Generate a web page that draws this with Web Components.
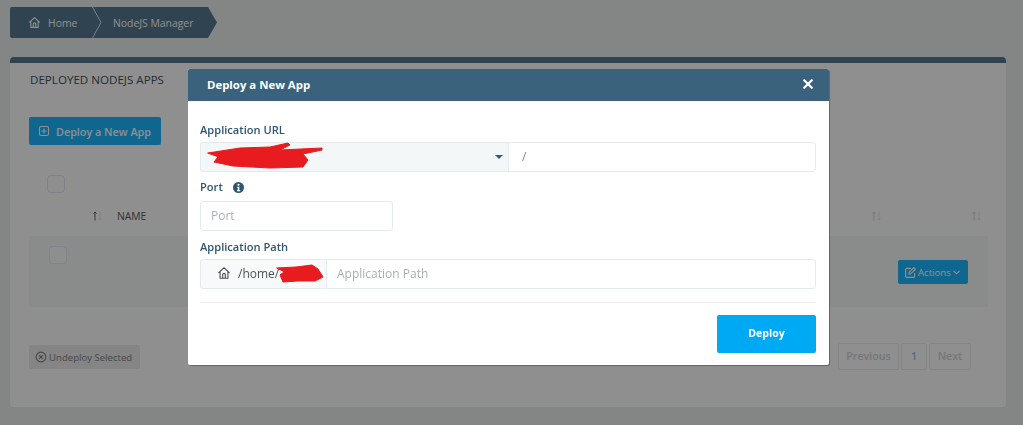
<!DOCTYPE html>
<html>
<head>
<meta charset="utf-8">
<title>NodeJS Manager</title>
<style>
  html, body { margin: 0; height: 100%; }
  body {
    background: #ecefef;
    font-family: "Open Sans", sans-serif;
    overflow: hidden;
    position: relative;
  }
</style>
</head>
<body>
<app-page>
  <crumb-bar></crumb-bar>
  <apps-card></apps-card>
</app-page>
<deploy-modal></deploy-modal>
<script>
const ICONS = {
  home: '<path d="M2 7.5 8 2l6 5.5M3.5 6.5V14h9V6.5M6.5 14v-4a1.5 1.5 0 0 1 3 0v4"/>',
  plus: '<rect x="2" y="2" width="12" height="12" rx="2"/><path d="M8 5v6M5 8h6"/>',
  edit: '<path d="M13 9v3.5a1.5 1.5 0 0 1-1.5 1.5h-8A1.5 1.5 0 0 1 2 12.5v-8A1.5 1.5 0 0 1 3.500 3H8"/><path d="M6.500 7.500 12 2l2 2-5.500 5.500-2.500.5z"/>',
  chevron: '<path d="M3 5.500 8 10l5-4.500"/>',
  cancel: '<circle cx="8" cy="8" r="6.500"/><path d="M5.800 5.800l4.400 4.400M10.200 5.800l-4.400 4.400"/>'
};

function icon(name, size, width) {
  return `<svg width="${size}" height="${size}" viewBox="0 0 16 16" fill="none" stroke="currentColor" stroke-width="${width || 1.4}" stroke-linecap="round" stroke-linejoin="round">${ICONS[name]}</svg>`;
}

class AppPage extends HTMLElement {
  constructor() {
    super();
    this.attachShadow({ mode: 'open' });
    this.shadowRoot.innerHTML = `
      <style>
        :host { display: flex; flex-direction: column; gap: 19px; padding: 7px 17px 18px 10px; height: 400px; }
      </style>
      <slot></slot>`;
  }
}

class CrumbBar extends HTMLElement {
  constructor() {
    super();
    this.attachShadow({ mode: 'open' });
    this.shadowRoot.innerHTML = `
      <style>
        :host {
          display: flex; align-items: center; align-self: flex-start;
          width: 207px; height: 31px; box-sizing: border-box;
          background: #55788f; color: #fff; font-size: 10.400px;
          clip-path: polygon(0 0, 198px 0, 207px 50%, 198px 100%, 0 100%);
          border-radius: 2px 0 0 2px;
        }
        .home { display: flex; align-items: center; gap: 7px; padding-left: 18px; width: 64px; }
        svg { display: block; flex: none; }
        .sep { margin-right: 11px; }
      </style>
      <span class="home">${icon('home', 13)}<span>Home</span></span>
      <svg class="sep" width="10" height="31" viewBox="0 0 10 31" fill="none" stroke="#dbe3e8" stroke-width="1"><path d="M.5 0 9 15.500.5 31"/></svg>
      <span>NodeJS Manager</span>`;
  }
}

class NmButton extends HTMLElement {
  constructor() {
    super();
    this.attachShadow({ mode: 'open' });
    this.shadowRoot.innerHTML = `
      <style>
        :host {
          display: inline-flex; align-items: center; box-sizing: border-box;
          background: var(--btn-bg, #1bb8ff); color: var(--btn-fg, #fff);
          border-radius: 2px; white-space: nowrap;
        }
      </style>
      <slot></slot>`;
  }
}

class NmCheck extends HTMLElement {
  constructor() {
    super();
    this.attachShadow({ mode: 'open' });
    this.shadowRoot.innerHTML = `
      <style>
        :host {
          display: block; width: 18px; height: 18px; box-sizing: border-box;
          border: 1.500px solid #e0ebf3; border-radius: 4px; background: #fdfdfd;
        }
      </style>`;
  }
}

class SortMark extends HTMLElement {
  constructor() {
    super();
    this.attachShadow({ mode: 'open' });
    this.shadowRoot.innerHTML = `
      <style>:host { display: block; width: 9px; height: 10px; } svg { display: block; }</style>
      <svg width="9" height="10" viewBox="0 0 9 10" fill="none" stroke-width="1">
        <path stroke="${this.getAttribute('tone') || '#cfd2d4'}" d="M2 9.500V1M.5 2.500 2 1l1.500 1.500"/>
        <path stroke="#e4e6e7" d="M7 .5V9M5.500 7.500 7 9l1.500-1.500"/>
      </svg>`;
  }
}

class AppsCard extends HTMLElement {
  constructor() {
    super();
    this.attachShadow({ mode: 'open' });
    this.shadowRoot.innerHTML = `
      <style>
        :host {
          display: flex; flex-direction: column; box-sizing: border-box;
          height: 350px; padding: 0 18px 0 19px;
          background: #fff; border-top: 6px solid #54798f;
          border-radius: 4px 4px 3px 3px; color: #3d4a52;
        }
        h2 { margin: 7px 0 0 1px; font-size: 11.600px; font-weight: 400; line-height: 20px; color: #40505c; }
        .add {
          width: 132px; height: 28px; margin-top: 27px;
          padding-left: 9px; gap: 6px; font-size: 10.800px; font-weight: 600;
        }
        .checks { margin: 30px 0 0 18px; }
        .head {
          display: flex; align-items: center; height: 20px; margin-top: 13px;
          font-size: 10.300px; color: #52585c;
        }
        .head .first { margin-left: 64px; margin-right: 15px; }
        .head .name { flex: 1; }
        .head .mid { margin-right: 91px; }
        .head .last { margin-right: 7px; }
        .row {
          display: flex; justify-content: space-between; box-sizing: border-box;
          height: 71px; margin-top: 10px; padding: 10px 20px 0 20px;
          background: #f6f8f8;
        }
        .actions {
          width: 70px; height: 24px; margin-top: 14px;
          padding-left: 6px; gap: 1px; font-size: 9.600px;
        }
        .foot {
          display: flex; justify-content: space-between; align-items: flex-start;
          margin-top: 36px; padding-right: 17px;
        }
        .undeploy {
          --btn-bg: #eeeeee; --btn-fg: #7c8084; width: 111px; height: 24px; margin-top: 2px;
          padding-left: 6px; gap: 2px; font-size: 9.600px;
        }
        .pages { display: flex; gap: 2px; font-size: 10.700px; font-weight: 600; color: #d0d4d6; }
        .pages span {
          display: flex; align-items: center; justify-content: center;
          height: 27px; box-sizing: border-box; padding-bottom: 2px;
          border: 1px solid #ebedee; border-radius: 2px;
        }
        .pages .cur { color: #9cc4de; }
        svg { display: block; flex: none; }
      </style>
      <h2>DEPLOYED NODEJS APPS</h2>
      <div><nm-button class="add">${icon('plus', 12)}<span>Deploy a New App</span></nm-button></div>
      <nm-check class="checks"></nm-check>
      <div class="head">
        <sort-mark class="first" tone="#5d6266"></sort-mark>
        <span class="name">NAME</span>
        <sort-mark class="mid"></sort-mark>
        <sort-mark class="last"></sort-mark>
      </div>
      <div class="row">
        <nm-check></nm-check>
        <nm-button class="actions">${icon('edit', 13)}<span>Actions</span>${icon('chevron', 9, 2)}</nm-button>
      </div>
      <div class="foot">
        <nm-button class="undeploy">${icon('cancel', 12, 1.500)}<span>Undeploy Selected</span></nm-button>
        <div class="pages">
          <span style="width:61px">Previous</span>
          <span class="cur" style="width:26px">1</span>
          <span style="width:42px">Next</span>
        </div>
      </div>`;
  }
}

class FormField extends HTMLElement {
  constructor() {
    super();
    this.attachShadow({ mode: 'open' });
    this.shadowRoot.innerHTML = `
      <style>
        :host { display: block; }
        label {
          display: flex; align-items: center; gap: 10px;
          box-sizing: border-box; height: 16px; padding-bottom: 2px; margin-bottom: 4px;
          font-size: 11.100px; font-weight: 600; color: #2f5570;
        }
        :host([hinted]) label { margin-bottom: 6px; }
        ::slotted([slot="hint"]) { margin-top: 2px; }
      </style>
      <label><span>${this.getAttribute('label')}</span><slot name="hint"></slot></label>
      <slot></slot>`;
  }
}

class TextBox extends HTMLElement {
  constructor() {
    super();
    this.attachShadow({ mode: 'open' });
    this.shadowRoot.innerHTML = `
      <style>
        :host {
          display: flex; align-items: center; box-sizing: border-box; height: 30px;
          padding: 0 10px 2px; background: #fff;
          border: 1px solid #e4ebf0; border-radius: 3px;
          font-size: 12px; color: #a9afb6;
        }
      </style>
      <slot></slot>`;
  }
}

class RedactMark extends HTMLElement {
  constructor() {
    super();
    this.attachShadow({ mode: 'open' });
    const w = this.getAttribute('w');
    const h = this.getAttribute('h');
    this.shadowRoot.innerHTML = `
      <style>
        :host { position: absolute; display: block; left: ${this.getAttribute('x')}px; top: ${this.getAttribute('y')}px; }
        svg { display: block; }
      </style>
      <svg width="${w}" height="${h}" viewBox="0 0 ${w} ${h}" stroke-linejoin="round" stroke-linecap="round">
        <path fill="#e81b1e" stroke="#e81b1e" stroke-width="1" d="${this.getAttribute('d')}"/>
      </svg>`;
  }
}

class DeployModal extends HTMLElement {
  constructor() {
    super();
    this.attachShadow({ mode: 'open' });
    this.shadowRoot.innerHTML = `
      <style>
        :host {
          position: fixed; inset: 0; display: block; box-sizing: border-box;
          padding: 69px 0 0 188px; background: rgba(0,0,0,.44);
          color: #2f5570;
        }
        .dialog {
          position: relative; width: 641px; height: 296px;
          background: #fff; border-radius: 2px;
          box-shadow: 1px 1px 1px rgba(0,0,0,.3);
        }
        header {
          display: flex; align-items: center; justify-content: space-between; box-sizing: border-box;
          height: 32px; padding: 0 16px 2px 19px;
          background: #3b627c; color: #fff;
          font-size: 11.400px; font-weight: 700; border-radius: 2px 2px 0 0;
        }
        .close { display: block; }
        .form { display: flex; flex-direction: column; gap: 7px; padding: 21px 13px 0 12px; }
        .url { display: flex; }
        .select {
          display: flex; align-items: center; justify-content: flex-end; box-sizing: border-box;
          width: 308px; height: 30px; padding-right: 5px;
          background: #f3f7f7; border: 1px solid #e4ebf0; border-right: 0; border-radius: 3px 0 0 3px;
        }
        .caret { width: 0; height: 0; border: 4px solid transparent; border-top: 4px solid #3b5a70; border-bottom: 0; }
        .url text-box { flex: 1; padding-left: 13px; border-radius: 0 3px 3px 0; color: #7d8790; }
        .port { width: 193px; }
        .pathfield { margin-top: 1px; }
        .path { display: flex; }
        .prefix {
          display: flex; align-items: center; gap: 7px; box-sizing: border-box;
          width: 126px; height: 30px; padding: 0 0 2px 16px;
          background: #f8f9fa; border: 1px solid #e4ebf0; border-right: 0; border-radius: 3px 0 0 3px;
          font-size: 12px; color: #4c5257;
        }
        .path text-box { flex: 1; border-radius: 0 3px 3px 0; }
        hr { height: 1px; margin: 13px 13px 0 12px; border: 0; background: #eff1f2; }
        footer { display: flex; justify-content: flex-end; padding: 12px 13px 0 0; }
        .deploy {
          --btn-bg: #00a9f4; width: 99px; height: 38px; justify-content: center; padding-bottom: 2px;
          font-size: 10.600px; font-weight: 700;
        }
        svg { display: block; flex: none; }
      </style>
      <div class="dialog">
        <header>
          <span>Deploy a New App</span>
          <svg class="close" width="10" height="10" viewBox="0 0 10 10" fill="none" stroke="#fff" stroke-width="2.200" stroke-linecap="round"><path d="M1.200 1.200l7.600 7.600M8.800 1.200 1.200 8.800"/></svg>
        </header>
        <div class="form">
          <form-field label="Application URL">
            <div class="url">
              <div class="select"><span class="caret"></span></div>
              <text-box>/</text-box>
            </div>
          </form-field>
          <form-field label="Port" hinted>
            <svg slot="hint" width="11" height="11" viewBox="0 0 16 16"><circle cx="8" cy="8" r="8" fill="#2f5570"/><circle cx="8" cy="4" r="1.600" fill="#fff"/><path d="M6 6.800h3.200v5H10.500v1.600H5.800v-1.600H7V8.400H6z" fill="#fff"/></svg>
            <text-box class="port">Port</text-box>
          </form-field>
          <form-field class="pathfield" label="Application Path">
            <div class="path">
              <div class="prefix">${icon('home', 14, 1.300)}<span>/home/</span></div>
              <text-box>Application Path</text-box>
            </div>
          </form-field>
        </div>
        <hr>
        <footer><nm-button class="deploy">Deploy</nm-button></footer>
        <redact-mark x="18" y="72" w="120" h="30"
          d="M2 12 L34 7 L64 6 L82 2 L84 4 L74 9 L116 7 L116 9 L97 13 L102 19 L97 26 L64 27 L27 25 L8 21 L12 16 Z"></redact-mark>
        <redact-mark x="86" y="195" w="52" h="20"
          d="M3 4 L22 3 L38 1 L44 5 L49 13 L41 17 L24 17 L9 18 L6 11 L10 8 Z"></redact-mark>
      </div>`;
  }
}

customElements.define('app-page', AppPage);
customElements.define('crumb-bar', CrumbBar);
customElements.define('nm-button', NmButton);
customElements.define('nm-check', NmCheck);
customElements.define('sort-mark', SortMark);
customElements.define('apps-card', AppsCard);
customElements.define('form-field', FormField);
customElements.define('text-box', TextBox);
customElements.define('redact-mark', RedactMark);
customElements.define('deploy-modal', DeployModal);
</script>
</body>
</html>
